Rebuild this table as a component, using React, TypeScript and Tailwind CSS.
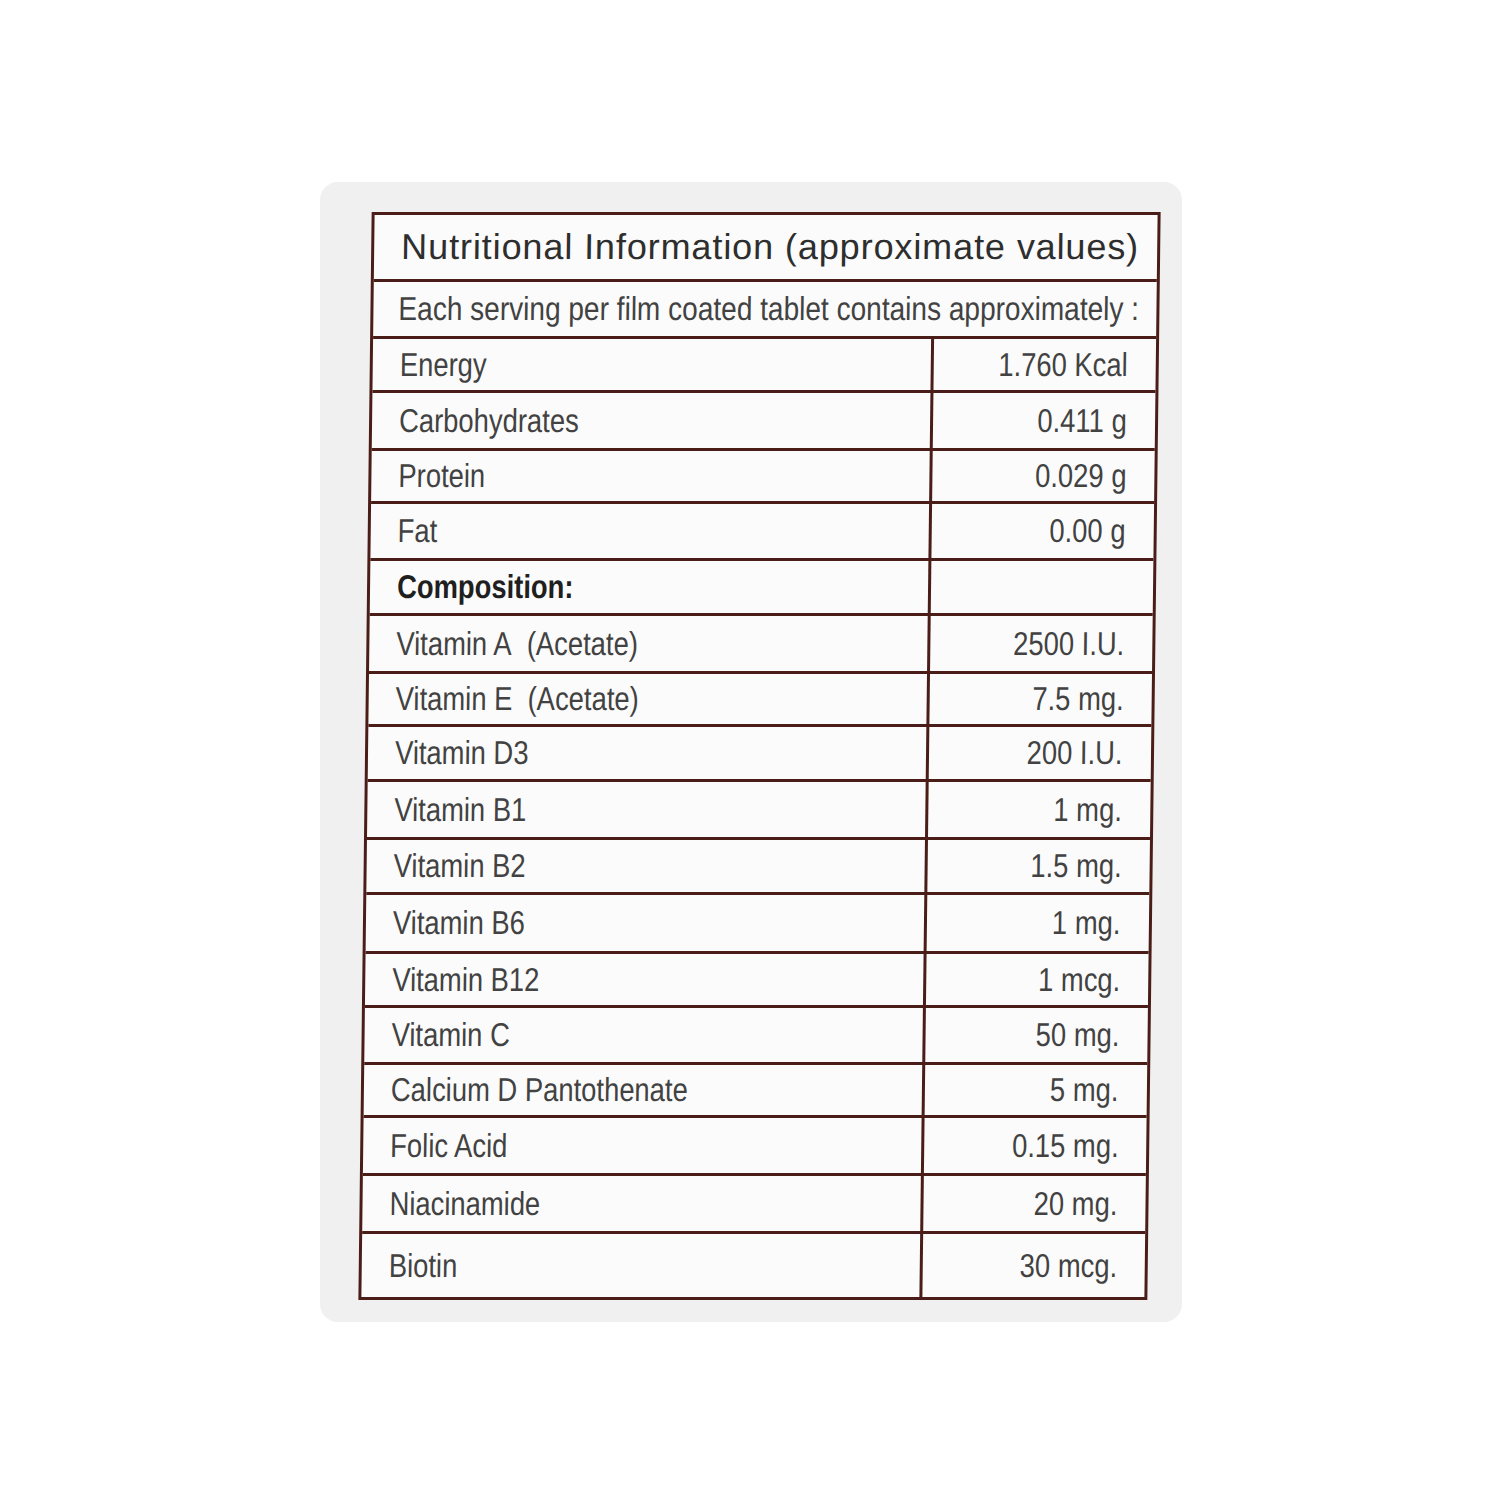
const rows: { label: string; value: string; h: string; bold?: boolean }[] = [
  { label: "Energy", value: "1.760 Kcal", h: "h-[54px]" },
  { label: "Carbohydrates", value: "0.411 g", h: "h-[58px]" },
  { label: "Protein", value: "0.029 g", h: "h-[53px]" },
  { label: "Fat", value: "0.00 g", h: "h-[57px]" },
  { label: "Composition:", value: "", h: "h-[55px]", bold: true },
  { label: "Vitamin A\u00a0 (Acetate)", value: "2500 I.U.", h: "h-[58px]" },
  { label: "Vitamin E\u00a0 (Acetate)", value: "7.5 mg.", h: "h-[53px]" },
  { label: "Vitamin D3", value: "200 I.U.", h: "h-[55px]" },
  { label: "Vitamin B1", value: "1 mg.", h: "h-[58px]" },
  { label: "Vitamin B2", value: "1.5 mg.", h: "h-[55px]" },
  { label: "Vitamin B6", value: "1 mg.", h: "h-[59px]" },
  { label: "Vitamin B12", value: "1 mcg.", h: "h-[54px]" },
  { label: "Vitamin C", value: "50 mg.", h: "h-[57px]" },
  { label: "Calcium D Pantothenate", value: "5 mg.", h: "h-[53px]" },
  { label: "Folic Acid", value: "0.15 mg.", h: "h-[58px]" },
  { label: "Niacinamide", value: "20 mg.", h: "h-[58px]" },
  { label: "Biotin", value: "30 mcg.", h: "h-[63px]" },
];

// the label uses a condensed face; squeeze Arial-width text horizontally
function Narrow({ children, right }: { children: React.ReactNode; right?: boolean }) {
  return (
    <span
      className={`inline-block whitespace-nowrap scale-x-[0.83] ${right ? "origin-right" : "origin-left"}`}
    >
      {children}
    </span>
  );
}

export default function App() {
  return (
    <div className="w-[1500px] h-[1500px] bg-white pt-[182px] pl-[320px]">
      <div className="w-[862px] h-[1140px] rounded-[18px] bg-[#f0f0f0] pt-[30px] pl-[45px]">
        <div className="w-[789px] border-[3px] border-[#4a1d18] bg-[#fbfbfb] -skew-x-[0.7deg] font-['Liberation_Sans',Arial,sans-serif] text-[33px] text-[#424242]">
          {/* header */}
          <div className="h-[67px] flex items-center pl-[27px] border-b-[3px] border-[#4a1d18] text-[36px] tracking-[0.9px] text-[#2e2e2e] whitespace-nowrap">
            Nutritional Information (approximate values)
          </div>
          <div className="h-[57px] flex items-center pl-[25px] border-b-[3px] border-[#4a1d18] overflow-hidden">
            <span className="inline-block whitespace-nowrap scale-x-[0.85] origin-left">
              Each serving per film coated tablet contains approximately :
            </span>
          </div>

          {rows.map((r, i) => (
            <div
              key={r.label}
              className={`flex ${r.h} ${i < rows.length - 1 ? "border-b-[3px] border-[#4a1d18]" : ""}`}
            >
              <div
                className={`w-[558px] flex items-center pl-[27px] ${r.bold ? "font-bold text-[#1f1f1f]" : ""}`}
              >
                <Narrow>{r.label}</Narrow>
              </div>
              <div className="flex-1 flex items-center justify-end pr-[28px] border-l-[3px] border-[#4a1d18]">
                <Narrow right>{r.value}</Narrow>
              </div>
            </div>
          ))}
        </div>
      </div>
    </div>
  );
}
